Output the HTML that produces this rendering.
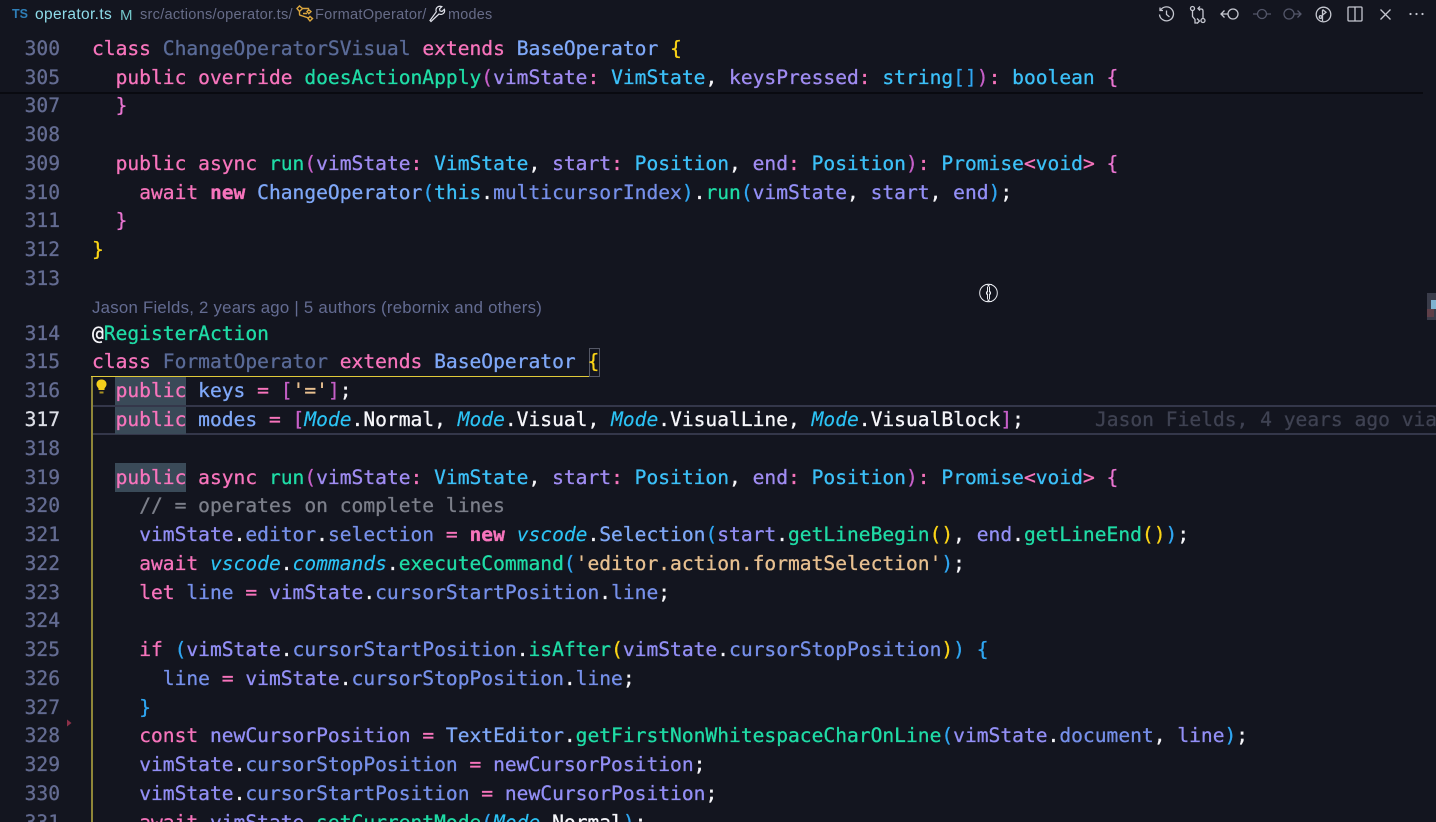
<!DOCTYPE html>
<html><head><meta charset="utf-8">
<style>
html,body{margin:0;padding:0;background:#13151f;width:1436px;height:822px;overflow:hidden}
#r{position:relative;width:1436px;height:822px;overflow:hidden;background:#13151f}
.l,.n{position:absolute;height:29px;line-height:29px;font-family:"DejaVu Sans Mono","Liberation Mono",monospace;font-size:19.6px;white-space:pre;font-weight:400;-webkit-text-stroke:0.3px currentColor}
.l{left:92px;color:#e8eaf0}
.n{left:0;width:60px;text-align:right;color:#646c92}
.k{color:#f774bc}.c{color:#5a6b98}.t{color:#7fa8f8}.f{color:#1fdca6}.p{color:#a08cf2}.y{color:#3cc0f8}.w{color:#f6f6fa}
.g{color:#fbd416}.m{color:#c65fc8}.b{color:#2fa6f2}.o{color:#f774bc}.i{color:#2cc4f6;font-style:italic;-webkit-text-stroke:0.15px currentColor}.s{color:#e8c090}.v{color:#938ff6}.d{color:#7690ea}.cm{color:#7c7f8a}.z{color:#e874d0}
.a{position:absolute}
.sn{position:absolute;font-family:"Liberation Sans",sans-serif;white-space:pre}
svg{position:absolute;overflow:visible}
</style></head><body><div id="r">

<div class="a" style="left:0;top:92px;width:1423px;height:2px;background:#090a10"></div>
<div class="a" style="left:92px;top:405px;width:1344px;height:30px;box-sizing:border-box;border-top:2px solid #34374a;border-bottom:2px solid #34374a"></div>
<div class="a" style="left:115px;top:377px;width:71px;height:28px;background:#3a4a58"></div>
<div class="a" style="left:115px;top:407px;width:71px;height:27px;background:#3a4a58"></div>
<div class="a" style="left:115px;top:463px;width:71px;height:29px;background:#3a4a58"></div>
<div class="a" style="left:91px;top:376px;width:2px;height:446px;background:#8f8638"></div>
<div class="a" style="left:91px;top:376px;width:498px;height:1px;background:#e0ca3a"></div>
<div class="a" style="left:589px;top:348px;width:9px;height:27px;border:1px solid #555866"></div>

<div class="sn" style="left:12px;top:7px;font-weight:700;font-size:12.500px;color:#2f7fb8;line-height:15px">TS</div>
<div class="sn" style="left:35px;top:6px;font-size:15.500px;letter-spacing:.35px;color:#8fdcea;line-height:18px">operator.ts</div>
<div class="sn" style="left:120px;top:7px;font-size:15px;color:#73c6c8;line-height:17px">M</div>
<div class="sn" style="left:140px;top:7px;font-size:14.600px;letter-spacing:.25px;color:#676c88;line-height:17px">src/actions/operator.ts/</div>
<svg style="left:296px;top:5px" width="18" height="18" viewBox="0 0 18 18" fill="none" stroke="#dba63e" stroke-width="1.400"><path d="M1 3.500L3.500 1 6.500 3.500 3.500 6.500zM11 6.500l1.800-1.800L15 6.500l-2.200 2.200zM12 13.500l2-2 2.500 2-2.500 2.500zM6 3.500h6.500v1.500M3.500 6.500v2.500q0 1.500 1.500 1.500l7.500 2.500M7 8.500h4"/></svg>
<div class="sn" style="left:315px;top:7px;font-size:14.600px;letter-spacing:.25px;color:#676c88;line-height:17px">FormatOperator/</div>
<svg style="left:428px;top:5px" width="18" height="18" viewBox="0 0 18 18" fill="none" stroke="#e0e2ea" stroke-width="1.200"><path d="M2 15.500l1 1 8-7.500c2 .8 4 .3 5-1.200.8-1.200.8-2.400.4-3.500l-2.400 2.200-2-.6-.5-2 2.300-2.300C12 1 10.500 1.200 9.300 2.200 8 3.400 7.700 5.200 8.300 6.800z"/></svg>
<div class="sn" style="left:448px;top:7px;font-size:14.400px;letter-spacing:.25px;color:#676c88;line-height:17px">modes</div>

<svg style="left:1158px;top:6px" width="17" height="17" viewBox="0 0 17 17" fill="none" stroke="#c5c7d0" stroke-width="1.300"><path d="M2.500 4.200A7 7 0 1 1 1.500 8.500M2 1.500v3h3M8.500 4.500v4l3 2.500"/></svg>
<svg style="left:1189px;top:5px" width="18" height="19" viewBox="0 0 18 19" fill="none" stroke="#c5c7d0" stroke-width="1.300"><circle cx="3.500" cy="3.500" r="2"/><circle cx="14" cy="15.500" r="2"/><path d="M3.500 5.500v6l2.500 3v3.500H9M14 13.500v-7.500q0-2-2-2H9M11 1.500L9 3.500l2 2M8 13.500l2.500 2.500-2.500 2.500"/></svg>
<svg style="left:1220px;top:6px" width="20" height="16" viewBox="0 0 20 16" fill="none" stroke="#c5c7d0" stroke-width="1.300"><circle cx="13" cy="8" r="5"/><path d="M8 8H1M4.500 4.500L1 8l3.500 3.500"/></svg>
<svg style="left:1252px;top:6px" width="20" height="16" viewBox="0 0 20 16" fill="none" stroke="#54576a" stroke-width="1.300"><circle cx="10" cy="8" r="4.500"/><path d="M1 8h4.500M14.500 8H19"/></svg>
<svg style="left:1282px;top:6px" width="20" height="16" viewBox="0 0 20 16" fill="none" stroke="#54576a" stroke-width="1.300"><circle cx="7" cy="8" r="5"/><path d="M12 8h7M15.500 4.500L19 8l-3.500 3.500"/></svg>
<svg style="left:1315px;top:6px" width="17" height="17" viewBox="0 0 17 17" fill="none" stroke="#c5c7d0" stroke-width="1.300"><circle cx="8.500" cy="8.500" r="7.300"/><path d="M7.500 4v11M7.500 3.500l3.500 2.800-3.500 2.800"/><circle cx="5.600" cy="11" r="1.300"/></svg>
<svg style="left:1347px;top:6px" width="16" height="16" viewBox="0 0 16 16" fill="none" stroke="#c5c7d0" stroke-width="1.300"><rect x="1" y="1" width="14" height="14" rx="1"/><path d="M8 1v14"/></svg>
<svg style="left:1379px;top:8px" width="13" height="13" viewBox="0 0 13 13" fill="none" stroke="#c5c7d0" stroke-width="1.300"><path d="M1.500 1.500l10 10M11.500 1.500l-10 10"/></svg>
<svg style="left:1409px;top:12px" width="15" height="4" viewBox="0 0 15 4" fill="#c5c7d0"><circle cx="1.500" cy="2" r="1.100"/><circle cx="7.500" cy="2" r="1.100"/><circle cx="13.500" cy="2" r="1.100"/></svg>

<div class="n" style="top:34px">300</div><div class="l" style="top:34px"><span class="k">class</span> <span class="c">ChangeOperatorSVisual</span> <span class="k">extends</span> <span class="t">BaseOperator</span> <span class="g">{</span></div>
<div class="n" style="top:63px">305</div><div class="l" style="top:63px">  <span class="k">public</span> <span class="k">override</span> <span class="f">doesActionApply</span><span class="m">(</span><span class="p">vimState</span><span class="o">:</span> <span class="y">VimState</span><span class="w">,</span> <span class="p">keysPressed</span><span class="o">:</span> <span class="y">string</span><span class="b">[]</span><span class="m">)</span><span class="o">:</span> <span class="y">boolean</span> <span class="z">{</span></div>
<div class="n" style="top:91px">307</div><div class="l" style="top:91px">  <span class="z">}</span></div>
<div class="n" style="top:120px">308</div>
<div class="n" style="top:149px">309</div><div class="l" style="top:149px">  <span class="k">public</span> <span class="k">async</span> <span class="f">run</span><span class="m">(</span><span class="p">vimState</span><span class="o">:</span> <span class="y">VimState</span><span class="w">,</span> <span class="p">start</span><span class="o">:</span> <span class="y">Position</span><span class="w">,</span> <span class="p">end</span><span class="o">:</span> <span class="y">Position</span><span class="m">)</span><span class="o">:</span> <span class="y">Promise</span><span class="o">&lt;</span><span class="y">void</span><span class="o">&gt;</span> <span class="z">{</span></div>
<div class="n" style="top:178px">310</div><div class="l" style="top:178px">    <span class="k">await</span> <span class="k" style="font-weight:700">new</span> <span class="t">ChangeOperator</span><span class="b">(</span><span class="y">this</span><span class="w">.</span><span class="d">multicursorIndex</span><span class="b">)</span><span class="w">.</span><span class="f">run</span><span class="b">(</span><span class="v">vimState</span><span class="w">,</span> <span class="v">start</span><span class="w">,</span> <span class="v">end</span><span class="b">)</span><span class="w">;</span></div>
<div class="n" style="top:206px">311</div><div class="l" style="top:206px">  <span class="z">}</span></div>
<div class="n" style="top:235px">312</div><div class="l" style="top:235px"><span class="g">}</span></div>
<div class="n" style="top:264px">313</div>

<div class="sn" style="left:92px;top:298px;font-size:16.800px;letter-spacing:.25px;color:#646c92;line-height:19px">Jason Fields, 2 years ago | 5 authors (rebornix and others)</div>

<div class="n" style="top:319px">314</div><div class="l" style="top:319px"><span class="w">@</span><span class="f">RegisterAction</span></div>
<div class="n" style="top:347px">315</div><div class="l" style="top:347px"><span class="k">class</span> <span class="c">FormatOperator</span> <span class="k">extends</span> <span class="t">BaseOperator</span> <span class="g">{</span></div>
<div class="n" style="top:376px">316</div><div class="l" style="top:376px">  <span class="k">public</span> <span class="t">keys</span> <span class="o">=</span> <span class="m">[</span><span class="s">'='</span><span class="m">]</span><span class="w">;</span></div>
<div class="n" style="top:405px;color:#dcdee6">317</div><div class="l" style="top:405px">  <span class="k">public</span> <span class="t">modes</span> <span class="o">=</span> <span class="m">[</span><span class="i">Mode</span><span class="w">.Normal,</span> <span class="i">Mode</span><span class="w">.Visual,</span> <span class="i">Mode</span><span class="w">.VisualLine,</span> <span class="i">Mode</span><span class="w">.VisualBlock</span><span class="m">]</span><span class="w">;</span></div>
<div class="l" style="top:405px;left:1095px;color:#3f4252">Jason Fields, 4 years ago via</div>
<div class="n" style="top:434px">318</div>
<div class="n" style="top:463px">319</div><div class="l" style="top:463px">  <span class="k">public</span> <span class="k">async</span> <span class="f">run</span><span class="m">(</span><span class="p">vimState</span><span class="o">:</span> <span class="y">VimState</span><span class="w">,</span> <span class="p">start</span><span class="o">:</span> <span class="y">Position</span><span class="w">,</span> <span class="p">end</span><span class="o">:</span> <span class="y">Position</span><span class="m">)</span><span class="o">:</span> <span class="y">Promise</span><span class="o">&lt;</span><span class="y">void</span><span class="o">&gt;</span> <span class="z">{</span></div>
<div class="n" style="top:491px">320</div><div class="l" style="top:491px">    <span class="cm">// = operates on complete lines</span></div>
<div class="n" style="top:520px">321</div><div class="l" style="top:520px">    <span class="v">vimState</span><span class="w">.</span><span class="d">editor</span><span class="w">.</span><span class="d">selection</span> <span class="o">=</span> <span class="k" style="font-weight:700">new</span> <span class="i">vscode</span><span class="w">.</span><span class="t">Selection</span><span class="b">(</span><span class="v">start</span><span class="w">.</span><span class="f">getLineBegin</span><span class="g">()</span><span class="w">,</span> <span class="v">end</span><span class="w">.</span><span class="f">getLineEnd</span><span class="g">()</span><span class="b">)</span><span class="w">;</span></div>
<div class="n" style="top:549px">322</div><div class="l" style="top:549px">    <span class="k">await</span> <span class="i">vscode</span><span class="w">.</span><span class="i">commands</span><span class="w">.</span><span class="f">executeCommand</span><span class="b">(</span><span class="s">'editor.action.formatSelection'</span><span class="b">)</span><span class="w">;</span></div>
<div class="n" style="top:578px">323</div><div class="l" style="top:578px">    <span class="k">let</span> <span class="d">line</span> <span class="o">=</span> <span class="v">vimState</span><span class="w">.</span><span class="d">cursorStartPosition</span><span class="w">.</span><span class="d">line</span><span class="w">;</span></div>
<div class="n" style="top:606px">324</div>
<div class="n" style="top:635px">325</div><div class="l" style="top:635px">    <span class="k">if</span> <span class="b">(</span><span class="v">vimState</span><span class="w">.</span><span class="d">cursorStartPosition</span><span class="w">.</span><span class="f">isAfter</span><span class="g">(</span><span class="v">vimState</span><span class="w">.</span><span class="d">cursorStopPosition</span><span class="g">)</span><span class="b">)</span> <span class="b">{</span></div>
<div class="n" style="top:664px">326</div><div class="l" style="top:664px">      <span class="d">line</span> <span class="o">=</span> <span class="v">vimState</span><span class="w">.</span><span class="d">cursorStopPosition</span><span class="w">.</span><span class="d">line</span><span class="w">;</span></div>
<div class="n" style="top:693px">327</div><div class="l" style="top:693px">    <span class="b">}</span></div>
<div class="n" style="top:721px">328</div><div class="l" style="top:721px">    <span class="k">const</span> <span class="v">newCursorPosition</span> <span class="o">=</span> <span class="t">TextEditor</span><span class="w">.</span><span class="f">getFirstNonWhitespaceCharOnLine</span><span class="b">(</span><span class="v">vimState</span><span class="w">.</span><span class="d">document</span><span class="w">,</span> <span class="v">line</span><span class="b">)</span><span class="w">;</span></div>
<div class="n" style="top:750px">329</div><div class="l" style="top:750px">    <span class="v">vimState</span><span class="w">.</span><span class="d">cursorStopPosition</span> <span class="o">=</span> <span class="v">newCursorPosition</span><span class="w">;</span></div>
<div class="n" style="top:779px">330</div><div class="l" style="top:779px">    <span class="v">vimState</span><span class="w">.</span><span class="d">cursorStartPosition</span> <span class="o">=</span> <span class="v">newCursorPosition</span><span class="w">;</span></div>
<div class="n" style="top:808px">331</div><div class="l" style="top:808px">    <span class="k">await</span> <span class="v">vimState</span><span class="w">.</span><span class="f">setCurrentMode</span><span class="b">(</span><span class="i">Mode</span><span class="w">.Normal</span><span class="b">)</span><span class="w">;</span></div>

<svg style="left:95px;top:379px" width="13" height="16" viewBox="0 0 13 16"><path d="M6.500 0.500C3.500 0.500 1.500 2.500 1.500 5.200c0 2 1.300 3 2 4.300V11h6V9.500c.7-1.300 2-2.300 2-4.300C11.500 2.500 9.500.5 6.500.5z" fill="#f5cf1b"/><path d="M4.500 12.500h4v2h-4z" fill="#a89020"/></svg>
<svg style="left:66px;top:719px" width="6" height="8" viewBox="0 0 6 8"><path d="M1 0.500L5.500 4 1 7.500z" fill="#8c3048"/></svg>
<svg style="left:979px;top:283px" width="20" height="20" viewBox="0 0 20 20" fill="none" stroke="#e8eaf0" stroke-width="1"><circle cx="9.500" cy="10" r="8.800"/><path d="M6.500 1.500h2L9.500 3l1-1.500h2.500M6.500 18.500h2L9.500 17l1 1.500h2.500M8.500 3.500v5.500H7.500v2h1v5.500M10.500 3.500v5.500h1v2h-1v5.500"/></svg>
<div class="a" style="left:1427px;top:293px;width:9px;height:27px;background:#3a3c4a"></div>
<div class="a" style="left:1431px;top:300px;width:5px;height:9px;background:#7fb2d0"></div>
<div class="a" style="left:1427px;top:309px;width:7px;height:8px;background:#5f3f48"></div>

</div></body></html>
